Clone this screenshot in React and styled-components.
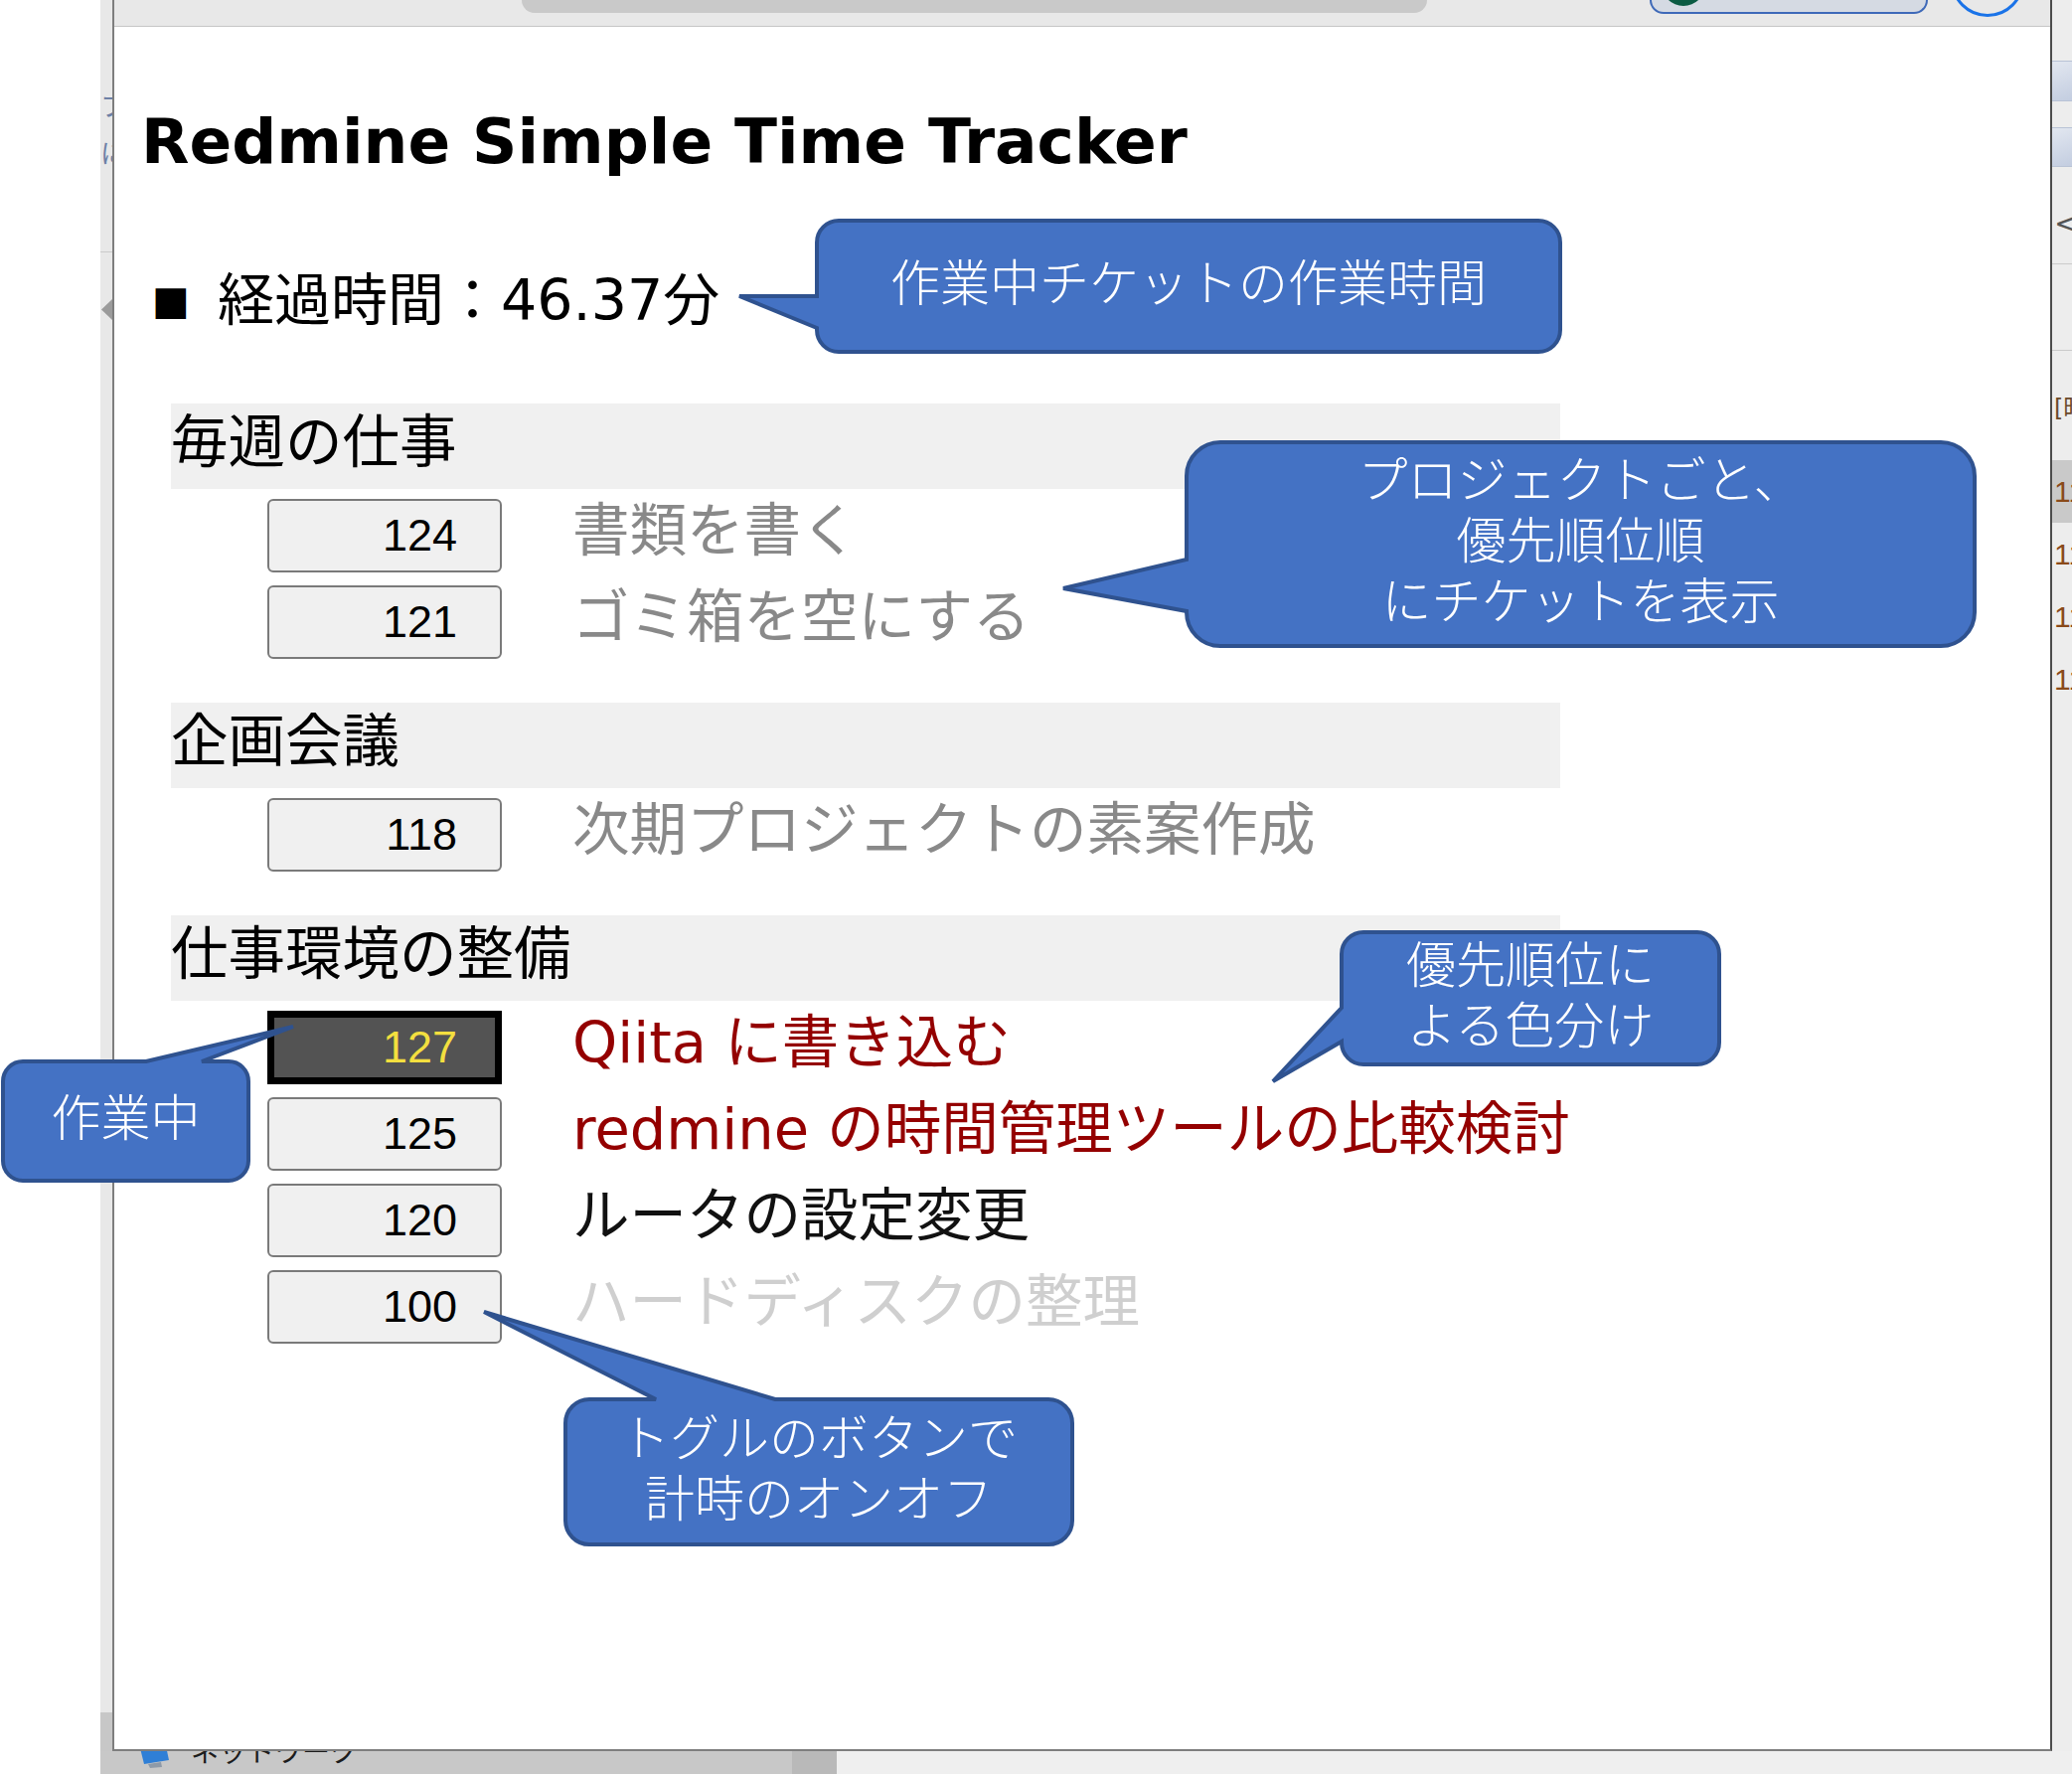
import React from 'react';
import styled, { createGlobalStyle } from 'styled-components';

const JP = `"Noto Sans CJK JP", "Noto Sans", sans-serif`;
const MIX = `"DejaVu Sans", "Noto Sans CJK JP", sans-serif`;

const GlobalStyle = createGlobalStyle`
  html, body { margin: 0; padding: 0; background: #ffffff; }
  body { font-family: ${JP}; }
  * { box-sizing: border-box; }
`;

const Page = styled.div`
  position: relative;
  width: 2085px;
  height: 1785px;
  overflow: hidden;
  display: grid;
  grid-template-columns: 101px 12px 1952px 20px;
  grid-template-rows: 1762px 23px;
  background: #ffffff;
`;

const Blank = styled.div`
  grid-column: 1;
  grid-row: 1 / 3;
  background: #ffffff;
`;

/* ---------- left strip (window behind) ---------- */
const LeftStrip = styled.div`
  grid-column: 2;
  grid-row: 1;
  background: #e8e8e8;
  display: flex;
  flex-direction: column;
  overflow: hidden;
`;
const PeekText = styled.div`
  margin-top: ${p => p.$mt}px;
  height: 26px;
  font: 26px/26px ${JP};
  color: #6d80a6;
  white-space: nowrap;
`;
const StripRule = styled.div`
  margin-top: ${p => p.$mt}px;
  height: 1px;
  background: #cbcbcb;
  flex: none;
`;
const StripArrow = styled.svg`
  margin-top: ${p => p.$mt}px;
  flex: none;
`;
const StripFill = styled.div`
  flex: 1;
`;
const StripShade = styled.div`
  height: 39px;
  background: #c7c7c7;
  flex: none;
`;

/* ---------- popup ---------- */
const Popup = styled.div`
  grid-column: 3;
  grid-row: 1;
  background: #ffffff;
  border-left: 2px solid #7e7e7e;
  border-right: 2px solid #4c4c4c;
  border-bottom: 2px solid #7e7e7e;
  display: flex;
  flex-direction: column;
`;

const Toolbar = styled.div`
  height: 27px;
  flex: none;
  background: #e8e8e8;
  border-bottom: 1px solid #c6c6c6;
  display: flex;
  align-items: flex-start;
  padding-left: 410px;
`;
const AddressPill = styled.div`
  flex: none;
  width: 911px;
  height: 13px;
  background: #c9c9c9;
  border-radius: 0 0 14px 14px;
`;
const ProfileChip = styled.div`
  flex: none;
  margin-left: 224px;
  width: 280px;
  height: 14px;
  background: #d5dae3;
  border: 2px solid #3e69b8;
  border-top: 0;
  border-radius: 0 0 18px 18px;
  overflow: hidden;
  padding-left: 10px;
`;
const ChipDot = styled.div`
  width: 44px;
  height: 44px;
  margin-top: -38px;
  border-radius: 50%;
  background: #0b5b43;
`;
const MenuRing = styled.div`
  flex: none;
  margin-left: 23px;
  margin-top: -57px;
  width: 74px;
  height: 74px;
  border-radius: 50%;
  border: 3px solid #1a73e8;
`;

const Content = styled.div`
  display: flex;
  flex-direction: column;
  padding-top: 79px;
`;

const Title = styled.h1`
  margin: 0 0 0 27px;
  font: bold 63px/74px "DejaVu Sans", sans-serif;
  color: #000000;
  white-space: nowrap;
`;

const Elapsed = styled.div`
  margin: 90px 0 0 38px;
  font: 57px/64px ${MIX};
  color: #000000;
  white-space: nowrap;
`;

const Mark = styled.span`
  display: inline-block;
  width: 66px;
  font-size: 40px;
  vertical-align: 6px;
`;

const ProjectList = styled.div`
  margin: 72px 0 0 57px;
  width: 1398px;
  display: flex;
  flex-direction: column;
  gap: 44px;
`;

const Project = styled.section`
  display: flex;
  flex-direction: column;
`;

const ProjectHeader = styled.div`
  height: 86px;
  background: #f0f0f0;
  font: 57.5px/79px ${MIX};
  color: #000000;
  white-space: nowrap;
`;

const TicketList = styled.div`
  display: flex;
  flex-direction: column;
  gap: 13px;
  padding: 10px 0 0 97px;
`;

const TicketRow = styled.div`
  display: flex;
  align-items: baseline;
`;

const TicketButton = styled.button`
  flex: none;
  width: 236px;
  height: 74px;
  margin: 0;
  text-align: right;
  font: 45px/${p => (p.$active ? 60 : 70)}px "Liberation Sans", Arial, sans-serif;
  color: ${p => (p.$active ? '#f3df3f' : '#000000')};
  background: ${p => (p.$active ? '#535353' : '#f0f0f0')};
  border: ${p => (p.$active ? '7px solid #000000' : '2px solid #7a7a7a')};
  border-radius: ${p => (p.$active ? '0' : '6px')};
  padding: 0 ${p => (p.$active ? 38 : 43)}px 0 0;
  cursor: pointer;
`;

const toneColor = {
  muted: '#898989',
  high: '#940000',
  normal: '#111111',
  low: '#cfcfcf',
};

const TicketTitle = styled.span`
  margin-left: 71px;
  font: 57.5px/65px ${MIX};
  color: ${p => toneColor[p.$tone]};
  white-space: nowrap;
`;

/* ---------- right strip ---------- */
const RightStrip = styled.div`
  grid-column: 4;
  grid-row: 1;
  background: #ededed;
  display: flex;
  flex-direction: column;
  overflow: hidden;
`;
const StripIcon = styled.div`
  flex: none;
  margin-top: ${p => p.$mt}px;
  height: ${p => p.$h}px;
  background: linear-gradient(160deg, #e2e7f0, #c3cde0);
  border-top: 1px solid #b9c3d6;
  border-bottom: 1px solid #b9c3d6;
`;
const StripGlyph = styled.div`
  flex: none;
  margin-top: ${p => p.$mt}px;
  height: ${p => p.$h}px;
  font: ${p => p.$size}px/${p => p.$h}px "DejaVu Sans", ${JP};
  color: ${p => p.$color};
  white-space: nowrap;
  padding-left: 2px;
`;
const StripRows = styled.div`
  flex: none;
  margin-top: 39px;
  display: flex;
  flex-direction: column;
`;
const StripRow = styled.div`
  flex: none;
  height: 63px;
  font: 30px/63px "Liberation Sans", Arial, sans-serif;
  color: #8a4a1a;
  background: ${p => (p.$selected ? '#c9c9c9' : 'transparent')};
  white-space: nowrap;
  padding-left: 2px;
`;

/* ---------- bottom bar ---------- */
const BottomBar = styled.div`
  grid-column: 2 / 5;
  grid-row: 2;
  display: flex;
  overflow: hidden;
`;
const NavPane = styled.div`
  flex: none;
  width: 696px;
  background: #c8c8c8;
  display: flex;
  align-items: flex-start;
  padding-left: 36px;
  gap: 19px;
`;
const NavIcon = styled.svg`
  flex: none;
  margin-top: -5px;
`;
const NavLabel = styled.div`
  margin-top: -15px;
  font: 28px/28px ${JP};
  color: #1c1c1c;
  white-space: nowrap;
`;
const Splitter = styled.div`
  flex: none;
  width: 45px;
  background: #b9b9b9;
`;
const MainPane = styled.div`
  flex: 1;
  background: #efefef;
`;

/* ---------- callouts ---------- */
const CalloutBox = styled.div`
  position: absolute;
  left: ${p => p.$x}px;
  top: ${p => p.$y}px;
  width: ${p => p.$w}px;
  height: ${p => p.$h}px;
  z-index: 5;
`;
const CalloutShape = styled.svg`
  position: absolute;
  left: 0;
  top: 0;
  overflow: visible;
`;
const CalloutText = styled.div`
  position: relative;
  height: 100%;
  padding-bottom: 14px;
  display: flex;
  flex-direction: column;
  align-items: center;
  justify-content: center;
  color: #ffffff;
  font-family: ${JP};
  font-weight: 300;
  font-size: 50px;
  line-height: 61px;
  text-align: center;
  white-space: nowrap;
`;

function calloutPath(w, h, r, t) {
  const corner = (x, y) => `A ${r} ${r} 0 0 1 ${x} ${y}`;
  if (t.side === 'left') {
    return [
      `M ${r} 0`, `H ${w - r}`, corner(w, r), `V ${h - r}`, corner(w - r, h),
      `H ${r}`, corner(0, h - r), `V ${t.b}`, `L ${t.tx} ${t.ty}`, `L 0 ${t.a}`,
      `V ${r}`, corner(r, 0), 'Z',
    ].join(' ');
  }
  return [
    `M ${r} 0`, `H ${t.a}`, `L ${t.tx} ${t.ty}`, `L ${t.b} 0`, `H ${w - r}`,
    corner(w, r), `V ${h - r}`, corner(w - r, h), `H ${r}`, corner(0, h - r),
    `V ${r}`, corner(r, 0), 'Z',
  ].join(' ');
}

function Callout({ x, y, w, h, tail, lines }) {
  const r = Math.round(Math.min(w, h) / 6);
  return (
    <CalloutBox $x={x} $y={y} $w={w} $h={h}>
      <CalloutShape width={w} height={h} viewBox={`0 0 ${w} ${h}`}>
        <path
          d={calloutPath(w, h, r, tail)}
          fill="#4472c4"
          stroke="#2f528f"
          strokeWidth="4"
          strokeLinejoin="miter"
        />
      </CalloutShape>
      <CalloutText>
        {lines.map(l => (
          <span key={l}>{l}</span>
        ))}
      </CalloutText>
    </CalloutBox>
  );
}

const projects = [
  {
    name: '毎週の仕事',
    tickets: [
      { id: 124, title: '書類を書く', tone: 'muted' },
      { id: 121, title: 'ゴミ箱を空にする', tone: 'muted' },
    ],
  },
  {
    name: '企画会議',
    tickets: [{ id: 118, title: '次期プロジェクトの素案作成', tone: 'muted' }],
  },
  {
    name: '仕事環境の整備',
    tickets: [
      { id: 127, title: 'Qiita に書き込む', tone: 'high', active: true },
      { id: 125, title: 'redmine の時間管理ツールの比較検討', tone: 'high' },
      { id: 120, title: 'ルータの設定変更', tone: 'normal' },
      { id: 100, title: 'ハードディスクの整理', tone: 'low' },
    ],
  },
];

const callouts = [
  {
    x: 822, y: 222, w: 748, h: 132,
    tail: { side: 'left', a: 76, b: 108, tx: -78, ty: 76 },
    lines: ['作業中チケットの作業時間'],
  },
  {
    x: 1194, y: 445, w: 793, h: 205,
    tail: { side: 'left', a: 118, b: 170, tx: -124, ty: 147 },
    lines: ['プロジェクトごと、', '優先順位順', 'にチケットを表示'],
  },
  {
    x: 1350, y: 938, w: 380, h: 133,
    tail: { side: 'left', a: 76, b: 110, tx: -69, ty: 150 },
    lines: ['優先順位に', 'よる色分け'],
  },
  {
    x: 3, y: 1068, w: 247, h: 120,
    tail: { side: 'top', a: 144, b: 200, tx: 292, ty: -35 },
    lines: ['作業中'],
  },
  {
    x: 569, y: 1408, w: 510, h: 146,
    tail: { side: 'top', a: 91, b: 211, tx: -82, ty: -88 },
    lines: ['トグルのボタンで', '計時のオンオフ'],
  },
];

export default function App() {
  return (
    <>
      <GlobalStyle />
      <Page>
        <Blank />

        <LeftStrip>
          <PeekText $mt={93}>フ</PeekText>
          <PeekText $mt={21}>に</PeekText>
          <StripRule $mt={87} />
          <StripArrow $mt={46} width="12" height="23" viewBox="0 0 12 23">
            <polygon points="1,11.5 12,1 12,22" fill="#9b9b9b" />
          </StripArrow>
          <StripFill />
          <StripShade />
        </LeftStrip>

        <Popup>
          <Toolbar>
            <AddressPill />
            <ProfileChip>
              <ChipDot />
            </ProfileChip>
            <MenuRing />
          </Toolbar>
          <Content>
            <Title>Redmine Simple Time Tracker</Title>
            <Elapsed>
              <Mark>■</Mark>経過時間：46.37分
            </Elapsed>
            <ProjectList>
              {projects.map(p => (
                <Project key={p.name}>
                  <ProjectHeader>{p.name}</ProjectHeader>
                  <TicketList>
                    {p.tickets.map(t => (
                      <TicketRow key={t.id}>
                        <TicketButton $active={t.active}>{t.id}</TicketButton>
                        <TicketTitle $tone={t.tone}>{t.title}</TicketTitle>
                      </TicketRow>
                    ))}
                  </TicketList>
                </Project>
              ))}
            </ProjectList>
          </Content>
        </Popup>

        <RightStrip>
          <StripIcon $mt={61} $h={41} />
          <StripIcon $mt={26} $h={40} />
          <StripGlyph $mt={41} $h={31} $size={30} $color="#555555">&lt;</StripGlyph>
          <StripRule $mt={25} />
          <StripRule $mt={86} />
          <StripGlyph $mt={46} $h={25} $size={24} $color="#6b4a2a">[時</StripGlyph>
          <StripRows>
            <StripRow $selected>11</StripRow>
            <StripRow>11</StripRow>
            <StripRow>11</StripRow>
            <StripRow>11</StripRow>
          </StripRows>
        </RightStrip>

        <BottomBar>
          <NavPane>
            <NavIcon width="36" height="22" viewBox="0 0 36 22">
              <path d="M4 2 L30 0 L33 14 L8 18 Z" fill="#2f7fd6" />
              <path d="M12 18 L14 22 L26 21 L25 16 Z" fill="#8e9aa8" />
            </NavIcon>
            <NavLabel>ネットワーク</NavLabel>
          </NavPane>
          <Splitter />
          <MainPane />
        </BottomBar>

        {callouts.map((c, i) => (
          <Callout key={i} {...c} />
        ))}
      </Page>
    </>
  );
}
